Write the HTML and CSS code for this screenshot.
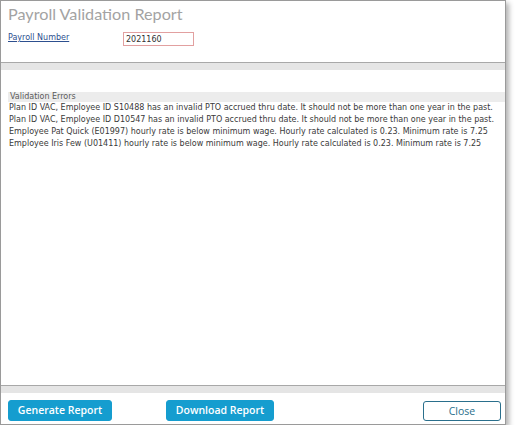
FILE: index.html
```html
<!DOCTYPE html>
<html>
<head>
<meta charset="utf-8">
<link rel="stylesheet" href="styles.css">
</head>
<body>
<div class="dialog">
  <div class="header">
    <h1 class="title">Payroll Validation Report</h1>
    <div class="field-row">
      <a class="field-label" href="#">Payroll Number</a>
      <input class="field-input" type="text" value="2021160">
    </div>
  </div>
  <div class="band"></div>
  <div class="content">
    <div class="errors">
      <div class="errors-head">Validation Errors</div>
      <div class="errors-line">Plan ID VAC, Employee ID S10488 has an invalid PTO accrued thru date. It should not be more than one year in the past.</div>
      <div class="errors-line">Plan ID VAC, Employee ID D10547 has an invalid PTO accrued thru date. It should not be more than one year in the past.</div>
      <div class="errors-line">Employee Pat Quick (E01997) hourly rate is below minimum wage. Hourly rate calculated is 0.23. Minimum rate is 7.25</div>
      <div class="errors-line">Employee Iris Few (U01411) hourly rate is below minimum wage. Hourly rate calculated is 0.23. Minimum rate is 7.25</div>
    </div>
  </div>
  <div class="band"></div>
  <div class="footer">
    <button class="btn btn-primary">Generate Report</button>
    <button class="btn btn-primary btn-download">Download Report</button>
    <button class="btn btn-outline">Close</button>
  </div>
</div>
</body>
</html>
```
FILE: styles.css
```css
html, body {
  margin: 0;
  padding: 0;
  background: #ffffff;
}
.dialog {
  width: 504px;
  height: 423px;
  border: 1px solid #9a9a9a;
  box-shadow: 3px 3px 5px rgba(0, 0, 0, 0.3);
  display: flex;
  flex-direction: column;
  background: #fff;
  font-family: "DejaVu Sans", Verdana, sans-serif;
}
.header {
  height: 61px;
  flex: none;
  padding: 0 7px;
  border-bottom: 1px solid #a8a8a8;
}
.title {
  margin: 3px 0 0 0;
  font-family: Lato, sans-serif;
  font-weight: 400;
  font-size: 16.2px;
  line-height: 20px;
  color: #a3a3a3;
}
.field-row {
  display: flex;
  align-items: flex-start;
  margin-top: 8px;
}
.field-label {
  width: 115px;
  font-size: 8px;
  line-height: 12px;
  color: #2d4f8f;
  text-decoration: underline;
}
.field-input {
  width: 65px;
  height: 12px;
  margin: 0;
  padding: 0 2px;
  border: 1px solid #e2a0a0;
  font-family: "DejaVu Sans", Verdana, sans-serif;
  font-size: 8px;
  color: #333;
  outline: none;
}
.band {
  height: 7px;
  flex: none;
  background: #e5e5e5;
}
.content {
  flex: 1;
  padding: 22px 0 0 7px;
  border-bottom: 1px solid #a8a8a8;
}
.errors-head {
  height: 10px;
  line-height: 10px;
  padding-left: 2px;
  background: #ececec;
  font-size: 8px;
  color: #5a5a5a;
}
.errors-line {
  padding-left: 1px;
  font-size: 8px;
  line-height: 12px;
  color: #3a3a3a;
  white-space: nowrap;
}
.footer {
  height: 31px;
  flex: none;
  display: flex;
  align-items: flex-start;
  padding: 7px 4px 0 7px;
  box-sizing: border-box;
}
.btn {
  height: 21px;
  padding: 0;
  border-radius: 3px;
  font-family: "Open Sans", sans-serif;
  font-size: 10.5px;
  font-weight: 600;
  line-height: 19px;
}
.btn-primary {
  width: 104px;
  background: #159dcf;
  border: 1px solid #159dcf;
  color: #fff;
}
.btn-download {
  width: 108px;
  margin-left: 54px;
}
.btn-outline {
  width: 78px;
  margin-left: auto;
  margin-top: 1px;
  height: 20px;
  background: #fff;
  border: 1px solid #2a6f8c;
  color: #2a6f8c;
  font-weight: 400;
}
```
